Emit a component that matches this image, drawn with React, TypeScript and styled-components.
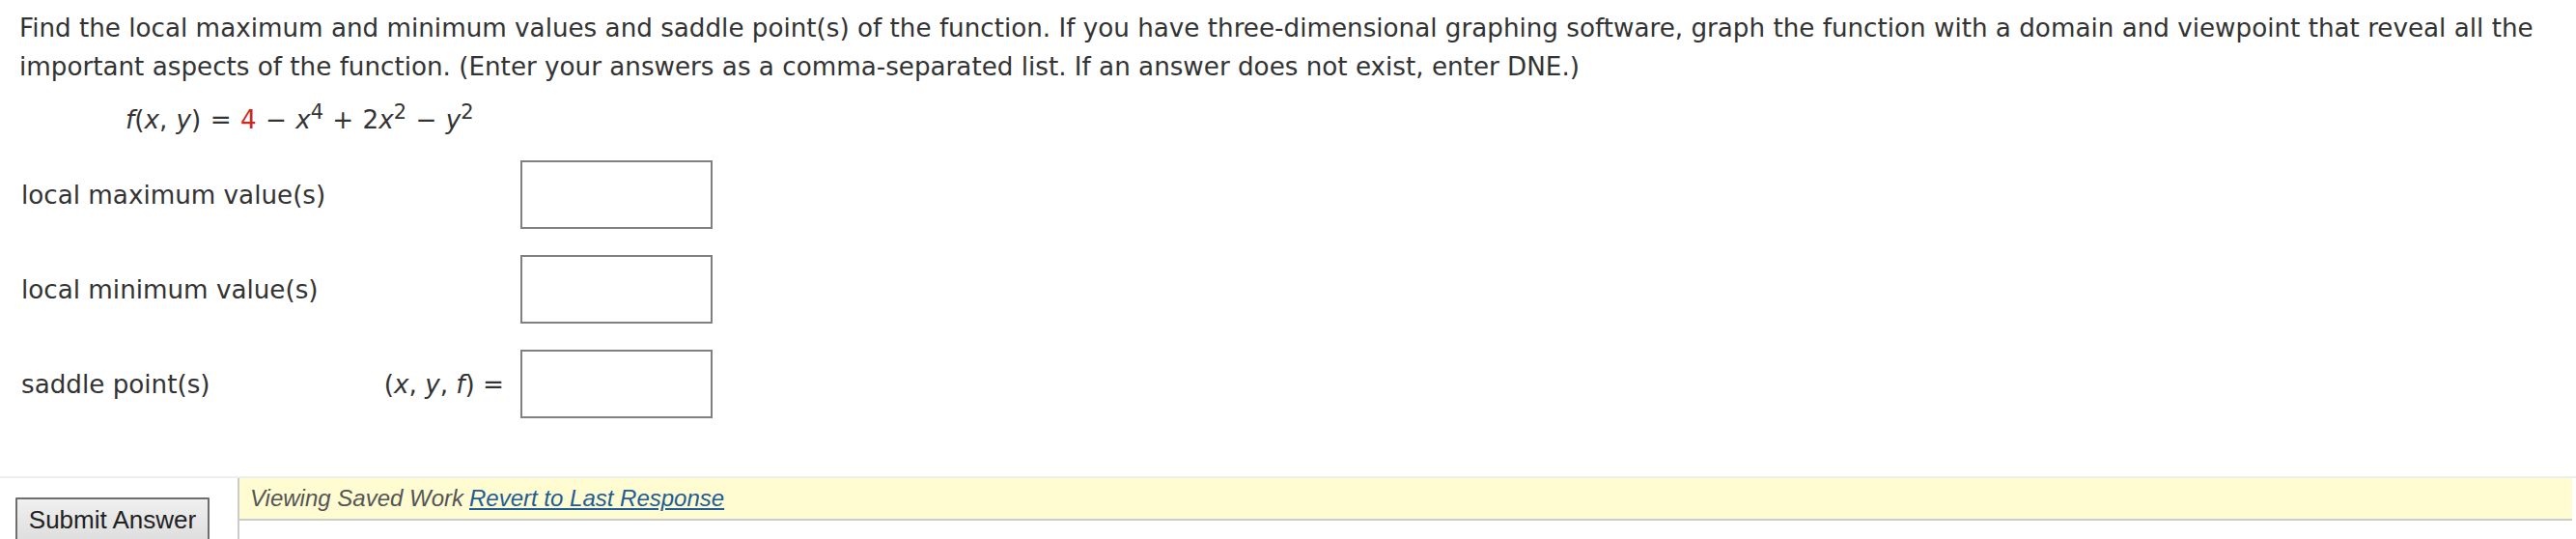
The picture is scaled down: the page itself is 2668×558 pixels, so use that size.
import React from "react"
import styled, { createGlobalStyle } from "styled-components"

const GlobalStyle = createGlobalStyle`
  html, body {
    margin: 0;
    padding: 0;
    background: #ffffff;
    overflow: hidden;
  }
`

const rows = [
  { label: "local maximum value(s)", prefix: false },
  { label: "local minimum value(s)", prefix: false },
  { label: "saddle point(s)", prefix: true },
]

const App = () => {
  return (
    <>
      <GlobalStyle />
      <Page>
        <Question>
          Find the local maximum and minimum values and saddle point(s) of the function. If you have three-dimensional graphing software, graph the function with a domain and viewpoint that reveal all the important aspects of the function. (Enter your answers as a comma-separated list. If an answer does not exist, enter DNE.)
        </Question>
        <Formula>
          <Var>f</Var>(<Var>x</Var>, <Var>y</Var>) = <Red>4</Red> − <Var>x</Var>
          <Sup>4</Sup> + 2<Var>x</Var>
          <Sup>2</Sup> − <Var>y</Var>
          <Sup>2</Sup>
        </Formula>
        <AnswerGrid>
          {rows.map((row) => (
            <React.Fragment key={row.label}>
              <Label>{row.label}</Label>
              <Prefix>
                {row.prefix && (
                  <>
                    (<Var>x</Var>, <Var>y</Var>, <Var>f</Var>) =
                  </>
                )}
              </Prefix>
              <AnswerBox />
            </React.Fragment>
          ))}
        </AnswerGrid>
      </Page>
      <Footer>
        <ButtonCell>
          <SubmitButton>Submit Answer</SubmitButton>
        </ButtonCell>
        <StatusCell>
          <SavedBar>
            <SavedText>Viewing Saved Work</SavedText> <RevertLink href="#">Revert to Last Response</RevertLink>
          </SavedBar>
        </StatusCell>
      </Footer>
    </>
  )
}

export default App

const Page = styled.div`
  padding: 9px 20px 0 20px;
  font-family: "DejaVu Sans", Verdana, sans-serif;
  font-size: 26.2px;
  color: #333333;
`

const Question = styled.div`
  line-height: 40px;
`

const Formula = styled.div`
  margin: 15px 0 0 110px;
  line-height: 40px;
  white-space: nowrap;
  word-spacing: 1px;
`

const Var = styled.i`
  font-style: italic;
`

const Red = styled.span`
  color: #cc2a1e;
`

const Sup = styled.sup`
  font-size: 0.8em;
  line-height: 0;
  vertical-align: 0.5em;
`

const AnswerGrid = styled.div`
  display: grid;
  grid-template-columns: 355px 130px 199px;
  column-gap: 17px;
  row-gap: 27px;
  align-items: center;
  margin-top: 22px;
`

const Label = styled.div`
  padding-left: 2px;
`

const Prefix = styled.div`
  text-align: right;
  white-space: nowrap;
`

const AnswerBox = styled.div`
  box-sizing: border-box;
  width: 199px;
  height: 71px;
  border: 2px solid #808080;
  background: #ffffff;
`

const Footer = styled.div`
  display: flex;
  margin-top: 60px;
  border-top: 2px solid #eeeeee;
  height: 63px;
  overflow: hidden;
`

const ButtonCell = styled.div`
  width: 246px;
  padding: 20px 0 0 16px;
  box-sizing: border-box;
`

const SubmitButton = styled.button`
  box-sizing: border-box;
  width: 201px;
  height: 46px;
  border: 2px solid #6e6e6e;
  border-radius: 1px;
  background: linear-gradient(#f0f0f0, #dedede);
  font-family: "Liberation Sans", Arial, sans-serif;
  font-size: 26px;
  color: #222222;
  padding: 0;
`

const StatusCell = styled.div`
  flex: 1;
  margin-top: -2px;
  margin-right: 4px;
  border-left: 2px solid #cccccc;
`

const SavedBar = styled.div`
  height: 42px;
  border-top: 2px solid #cccccc;
  border-bottom: 2px solid #cccccc;
  background: #fffcd2;
  padding-left: 11px;
  display: flex;
  align-items: center;
  gap: 6px;
  font-family: "Liberation Sans", Arial, sans-serif;
  font-size: 24px;
  font-style: italic;
`

const SavedText = styled.span`
  color: #555555;
`

const RevertLink = styled.a`
  color: #1d5c96;
  text-decoration: underline;
`
